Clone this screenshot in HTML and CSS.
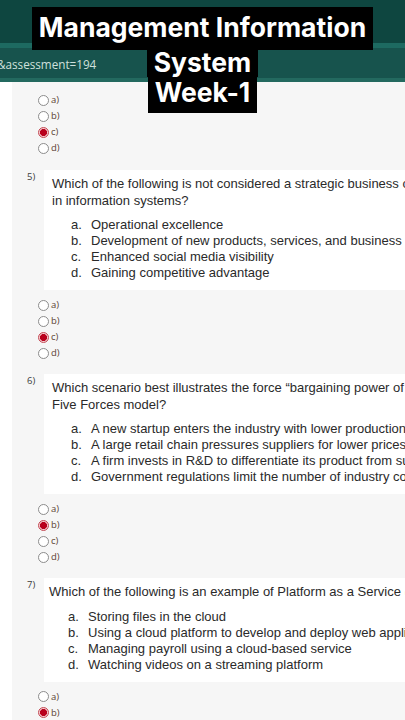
FILE: index.html
```html
<!DOCTYPE html>
<html>
<head>
<meta charset="utf-8">
<link rel="stylesheet" href="styles.css">
</head>
<body>
<div class="page">
  <header class="header">
    <div class="topbar"></div>
    <div class="stripe"></div>
    <div class="urlbar"><span class="url">&amp;assessment=194</span></div>
    <div class="stripe2"></div>
  </header>

  <main class="panel">
    <div class="options first">
      <div class="opt"><span class="radio"></span><span class="lbl">a)</span></div>
      <div class="opt"><span class="radio"></span><span class="lbl">b)</span></div>
      <div class="opt"><span class="radio on"></span><span class="lbl">c)</span></div>
      <div class="opt"><span class="radio"></span><span class="lbl">d)</span></div>
    </div>

    <div class="question">
      <span class="num">5)</span>
      <div class="card">
        <p class="qtext">Which of the following is not considered a strategic business objective of investing<br>in information systems?</p>
        <ol class="items">
          <li><span class="mk">a.</span>Operational excellence</li>
          <li><span class="mk">b.</span>Development of new products, services, and business models</li>
          <li><span class="mk">c.</span>Enhanced social media visibility</li>
          <li><span class="mk">d.</span>Gaining competitive advantage</li>
        </ol>
      </div>
    </div>
    <div class="options">
      <div class="opt"><span class="radio"></span><span class="lbl">a)</span></div>
      <div class="opt"><span class="radio"></span><span class="lbl">b)</span></div>
      <div class="opt"><span class="radio on"></span><span class="lbl">c)</span></div>
      <div class="opt"><span class="radio"></span><span class="lbl">d)</span></div>
    </div>

    <div class="question">
      <span class="num">6)</span>
      <div class="card">
        <p class="qtext">Which scenario best illustrates the force “bargaining power of buyers” in Porter’s<br>Five Forces model?</p>
        <ol class="items">
          <li><span class="mk">a.</span>A new startup enters the industry with lower production costs</li>
          <li><span class="mk">b.</span>A large retail chain pressures suppliers for lower prices</li>
          <li><span class="mk">c.</span>A firm invests in R&amp;D to differentiate its product from substitutes</li>
          <li><span class="mk">d.</span>Government regulations limit the number of industry competitors</li>
        </ol>
      </div>
    </div>
    <div class="options">
      <div class="opt"><span class="radio"></span><span class="lbl">a)</span></div>
      <div class="opt"><span class="radio on"></span><span class="lbl">b)</span></div>
      <div class="opt"><span class="radio"></span><span class="lbl">c)</span></div>
      <div class="opt"><span class="radio"></span><span class="lbl">d)</span></div>
    </div>

    <div class="question q7">
      <span class="num">7)</span>
      <div class="card">
        <p class="qtext">Which of the following is an example of Platform as a Service (PaaS)?</p>
        <ol class="items">
          <li><span class="mk">a.</span>Storing files in the cloud</li>
          <li><span class="mk">b.</span>Using a cloud platform to develop and deploy web applications</li>
          <li><span class="mk">c.</span>Managing payroll using a cloud-based service</li>
          <li><span class="mk">d.</span>Watching videos on a streaming platform</li>
        </ol>
      </div>
    </div>
    <div class="options">
      <div class="opt"><span class="radio"></span><span class="lbl">a)</span></div>
      <div class="opt"><span class="radio on"></span><span class="lbl">b)</span></div>
      <div class="opt"><span class="radio"></span><span class="lbl">c)</span></div>
      <div class="opt"><span class="radio"></span><span class="lbl">d)</span></div>
    </div>
  </main>

  <div class="title">
    <span class="tline t1">Management Information</span>
    <span class="tline t2">System</span>
    <span class="tline t3">Week-1</span>
  </div>
</div>
</body>
</html>
```

FILE: styles.css
```css
html, body {
  margin: 0;
  padding: 0;
  background: #ffffff;
}
body {
  width: 405px;
  height: 720px;
  overflow: hidden;
  font-family: "Liberation Sans", Arial, sans-serif;
}
.page {
  position: relative;
  width: 405px;
  height: 720px;
  overflow: hidden;
}

/* header */
.header {
  display: flex;
  flex-direction: column;
}
.topbar {
  height: 43px;
  background: #0e4640;
}
.stripe {
  height: 5px;
  background: #1d6a61;
}
.urlbar {
  height: 30px;
  background: #17534d;
  display: flex;
  align-items: center;
}
.url {
  margin-left: -3px;
  margin-top: 1px;
  color: #cfe0dc;
  font-family: "Open Sans", "Noto Sans", sans-serif;
  font-size: 11.7px;
  white-space: nowrap;
}
.stripe2 {
  height: 4px;
  background: #23695f;
}

/* content panel */
.panel {
  margin-left: 12px;
  width: 700px;
  background: #f6f6f6;
  padding-top: 10px;
  padding-bottom: 40px;
  display: flex;
  flex-direction: column;
}

.options {
  display: flex;
  flex-direction: column;
  padding-left: 26px;
  margin-top: 7px;
}
.options.first {
  margin-top: 0;
}
.opt {
  height: 16px;
  display: flex;
  align-items: center;
  gap: 2px;
}
.radio {
  width: 9px;
  height: 9px;
  border-radius: 50%;
  border: 1px solid #8c8c8c;
  background: #ffffff;
  box-sizing: content-box;
}
.radio.on {
  border-color: #c44a55;
  background: radial-gradient(circle, #b8001c 0 3.2px, #f3c9cd 3.8px);
}
.lbl {
  font-family: "Open Sans", "Noto Sans", sans-serif;
  font-size: 9.5px;
  color: #5a3f33;
  line-height: 16px;
}

.question {
  display: flex;
  align-items: flex-start;
  margin-top: 13px;
}
.first + .question {
  margin-top: 14px;
}
.num {
  width: 32px;
  padding-left: 15px;
  box-sizing: border-box;
  font-family: "Open Sans", "Noto Sans", sans-serif;
  font-size: 9.5px;
  color: #3c3c3c;
  line-height: 14px;
}
.card {
  flex: 1;
  background: #ffffff;
  padding: 6px 8px 9px 8px;
}
.qtext {
  margin: 0;
  font-size: 13px;
  line-height: 16.5px;
  color: #2a2a2a;
  white-space: nowrap;
}
.items {
  list-style: none;
  margin: 8px 0 0 0;
  padding: 0 0 0 19px;
  font-size: 13px;
  line-height: 16px;
  color: #2a2a2a;
  white-space: nowrap;
}
.items li {
  display: flex;
}
.mk {
  width: 20px;
  flex: none;
}
.q7 .card {
  padding-left: 5px;
}

/* title overlay */
.title {
  position: absolute;
  top: 7px;
  left: 0;
  width: 405px;
  display: flex;
  flex-direction: column;
  align-items: center;
}
.tline {
  background: #000000;
  color: #ffffff;
  font-family: "Inter", "Open Sans", sans-serif;
  font-weight: 700;
  font-size: 26.5px;
  line-height: 30px;
  padding: 0 7px;
  white-space: nowrap;
}
.t1 {
  padding-top: 5px;
  padding-bottom: 8px;
}
.t2 {
  margin-top: -3px;
}
.t3 {
  padding-bottom: 6px;
}
```
